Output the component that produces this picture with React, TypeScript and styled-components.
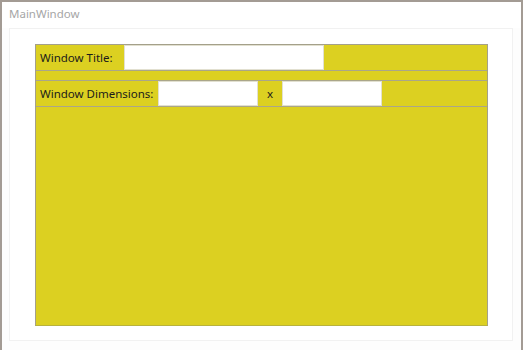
import React from 'react'
import styled, { createGlobalStyle } from 'styled-components'

const GlobalStyle = createGlobalStyle`
  html, body {
    margin: 0;
    padding: 0;
    background: #ffffff;
  }
  body {
    font-family: 'Noto Sans', 'Open Sans', sans-serif;
  }
`

const Frame = styled.div`
  width: 523px;
  height: 350px;
  box-sizing: border-box;
  border: 2px solid #a39b94;
  border-bottom: none;
  background: #f5f5f5;
  display: flex;
  flex-direction: column;
`

const TitleBar = styled.div`
  height: 26px;
  flex: none;
  box-sizing: border-box;
  background: #ffffff;
  display: flex;
  align-items: center;
  padding: 0 0 3px 7px;
  font-size: 11.5px;
  color: #a6a6a6;
`

const ClientOuter = styled.div`
  flex: 1;
  background: #fdfdfd;
  padding: 0 8px 9px 7px;
  display: flex;
`

const Client = styled.div`
  flex: 1;
  background: #ffffff;
  border: 1px solid #f1f1f1;
  padding: 15px 24px 14px 25px;
  display: flex;
`

const Panel = styled.div`
  flex: 1;
  background: #dcd021;
  border: 1px solid #a4a08a;
  border-bottom-color: #b8b23c;
  display: flex;
  flex-direction: column;
`

const Row = styled.div`
  height: 25px;
  flex: none;
  display: flex;
  border-bottom: 1px solid #aaa68a;
`

const Spacer = styled.div`
  height: 9px;
  flex: none;
  border-bottom: 1px solid #aaa68a;
`

const Label = styled.div<{ $width: number; $center?: boolean }>`
  width: ${({ $width }) => $width}px;
  flex: none;
  box-sizing: border-box;
  display: flex;
  align-items: center;
  justify-content: ${({ $center }) => ($center ? 'center' : 'flex-start')};
  padding-left: ${({ $center }) => ($center ? 0 : 4)}px;
  font-size: 11.5px;
  color: #1b1b1b;
  white-space: nowrap;
`

const Field = styled.input<{ $width: number }>`
  width: ${({ $width }) => $width}px;
  height: 25px;
  box-sizing: border-box;
  margin: 0;
  padding: 0 4px;
  border: 1px solid #e2e0d0;
  background: #ffffff;
  outline: none;
  font-family: inherit;
  font-size: 12px;
`

export default function App() {
  return (
    <>
      <GlobalStyle />
      <Frame>
        <TitleBar>MainWindow</TitleBar>
        <ClientOuter>
          <Client>
            <Panel>
              <Row>
                <Label $width={88}>Window Title:</Label>
                <Field $width={200} />
              </Row>
              <Spacer />
              <Row>
                <Label $width={122}>Window Dimensions:</Label>
                <Field $width={100} />
                <Label $width={24} $center>x</Label>
                <Field $width={100} />
              </Row>
            </Panel>
          </Client>
        </ClientOuter>
      </Frame>
    </>
  )
}
